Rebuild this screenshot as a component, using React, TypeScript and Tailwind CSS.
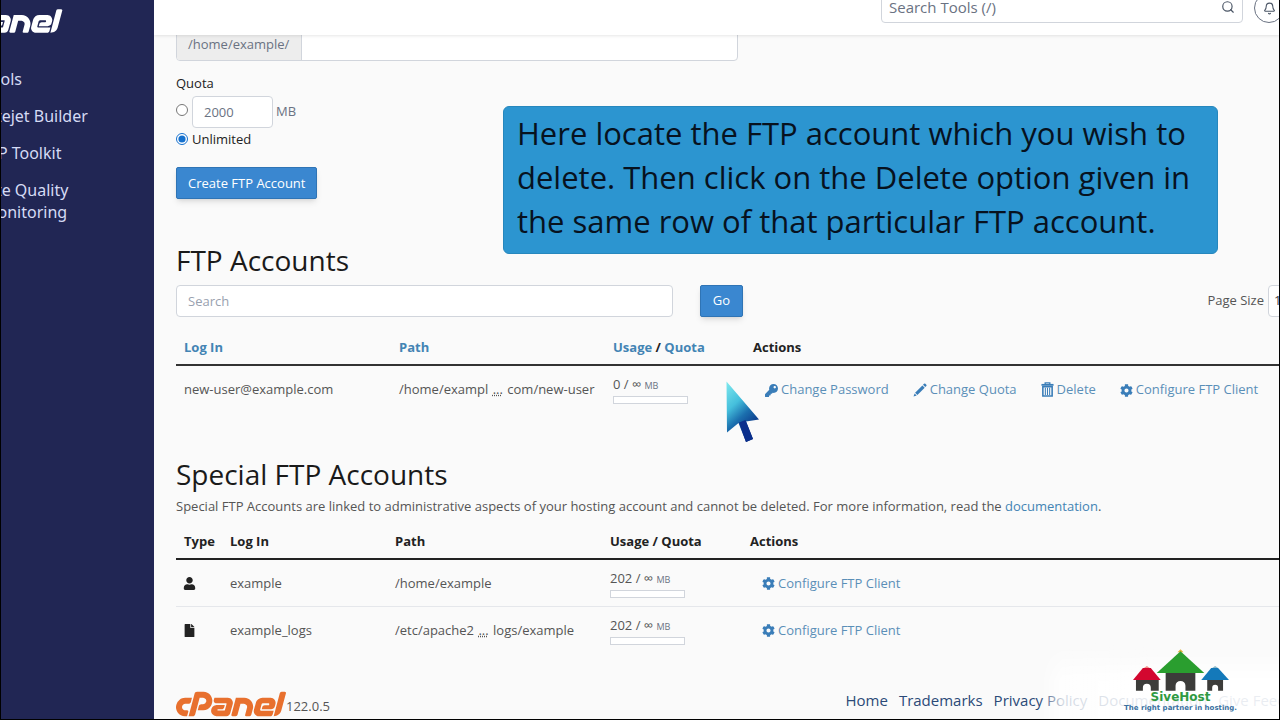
import type { ReactNode } from "react"
import { FaCog, FaFile, FaKey, FaUser } from "react-icons/fa"
import { SiCpanel } from "react-icons/si"
import { Bell, Search } from "lucide-react"

const navItems = ["Tools", "Sitejet Builder", "WP Toolkit", "Site Quality Monitoring"]

const footerLinks = ["Home", "Trademarks", "Privacy Policy", "Documentation", "Give Feedback"]

const specialAccounts = [
  { type: "Main", icon: FaUser, login: "example", path: "/home/example", used: "202" },
  { type: "Logs", icon: FaFile, login: "example_logs", path: "/etc/apache2 ... logs/example", used: "202" },
]

function TrashIcon() {
  return (
    <svg viewBox="0 0 14 16" className="w-[13px] h-[15px] -mt-0.5 shrink-0" fill="none" stroke="currentColor">
      <path d="M4.5 2V.8h5V2" strokeWidth="1.4" />
      <path d="M.5 3h13" strokeWidth="2" />
      <path d="M2 5h10v10H2z" strokeWidth="1.7" />
      <path d="M4.700 6v8M7 6v8M9.300 6v8" strokeWidth="1.1" />
    </svg>
  )
}

function PencilIcon() {
  return (
    <svg viewBox="0 0 14 14" className="size-[14px] shrink-0" fill="currentColor">
      <path d="M11 .8a1 1 0 0 1 1.400 0l.9.9a1 1 0 0 1 0 1.400l-1 1L10 1.800z" />
      <path d="M9.400 2.400l2.300 2.300-7.300 7.300-2.300-2.300z" />
      <path d="M1.600 10.400l2.100 2.100L.5 13.500z" />
    </svg>
  )
}

function Action({ icon, children }: { icon: ReactNode; children: ReactNode }) {
  return (
    <button type="button" className="flex items-center gap-[3px] px-3 text-[#5a8fb8] whitespace-nowrap">
      <span className="text-[#3a7db8]">{icon}</span>
      {children}
    </button>
  )
}

function Path({ value }: { value: string }) {
  const [start, end] = value.split(" ... ")
  if (!end) return <>{value}</>
  return (
    <>
      {start} <abbr title={value} className="mx-px underline decoration-dotted">...</abbr> {end}
    </>
  )
}

function Usage({ used }: { used: string }) {
  return (
    <div>
      <div className="leading-[18px]">
        {used} / ∞ <span className="text-[9px] text-gray-500">MB</span>
      </div>
      <div className="mt-px h-2 w-[75px] border border-gray-300 bg-white" />
    </div>
  )
}

function Sidebar() {
  return (
    <aside className="w-[153px] shrink-0 overflow-hidden bg-[#212654] text-[#d5dbf5]">
      <SiCpanel viewBox="0 9.3 24 5.4" className="mt-[9px] -ml-[46px] w-[108px] h-6 text-white" />
      <nav className="mt-[35px] -ml-[18px] w-[130px] flex flex-col gap-[15px] font-['Noto_Sans',sans-serif] text-base leading-[22px]">
        {navItems.map((item) => (
          <a key={item} href="#">{item}</a>
        ))}
      </nav>
    </aside>
  )
}

function Header() {
  return (
    <header className="relative z-10 h-[35px] shrink-0 flex items-end justify-end bg-white pb-3 shadow-[0_1px_3px_rgba(0,0,0,0.1)]">
      <label className="flex items-center w-[362px] h-8 border border-gray-300 rounded px-[7px] text-gray-600">
        <input aria-label="Search Tools" placeholder="Search Tools (/)" className="flex-1 min-w-0 text-[15px] outline-none placeholder:text-gray-500" />
        <Search className="size-[14px]" />
      </label>
      <button type="button" aria-label="Notifications" className="ml-[11px] -mr-[5px] size-[30px] shrink-0 rounded-full border border-gray-500 flex items-center justify-center text-gray-600">
        <Bell className="size-[13px]" />
      </button>
    </header>
  )
}

function CreateForm() {
  return (
    <form>
      <div className="-mt-[6px] flex h-8 w-[562px] border border-gray-300 rounded overflow-hidden bg-white">
        <label htmlFor="directory" className="w-[125px] flex items-center pl-[11px] bg-[#ededed] border-r border-gray-300 text-gray-500">
          /home/example/
        </label>
        <input id="directory" className="flex-1 px-3 outline-none" />
      </div>
      <div className="mt-3 leading-5 font-medium text-[#222]">Quota</div>
      <div className="mt-[3px] flex items-center">
        <input type="radio" name="quota" aria-label="Limited quota" className="size-3 -mt-1" />
        <input aria-label="Quota size" defaultValue="2000" className="ml-1 h-8 w-[81px] border border-gray-300 rounded bg-white px-[11px] text-gray-500" />
        <span className="ml-[3px] text-gray-500">MB</span>
      </div>
      <label className="mt-px flex items-center gap-1 leading-5 font-medium text-[#222]">
        <input type="radio" name="quota" defaultChecked className="size-3 accent-[#1570cd]" />
        Unlimited
      </label>
      <button type="button" className="mt-[18px] h-8 px-[11px] rounded-xs border border-[#2f74b5] bg-[#3a87d0] text-white font-medium leading-5 shadow-md">
        Create FTP Account
      </button>
    </form>
  )
}

function FtpAccounts() {
  return (
    <section className="mt-[43px]">
      <h2 className="text-[28px] leading-9 text-[#1a1a1a]">FTP Accounts</h2>
      <div className="mt-[7px] flex items-center">
        <input aria-label="Search accounts" placeholder="Search" className="h-8 w-[497px] border border-gray-300 rounded bg-white px-[11px] placeholder:text-gray-400" />
        <button type="button" className="ml-[27px] h-8 w-[43px] rounded-xs border border-[#2f74b5] bg-[#3a87d0] text-white font-medium shadow-md">Go</button>
        <label htmlFor="page-size" className="ml-auto">Page Size</label>
        <select id="page-size" className="ml-1 h-8 w-[55px] appearance-none border border-gray-300 rounded bg-white px-[5px] text-[#444]">
          <option>10</option>
        </select>
      </div>
      <table className="mt-3 w-full table-fixed text-left">
        <thead>
          <tr className="h-9 border-b-2 border-[#333] text-[#222]">
            <th className="w-[215px] px-2 pt-0.5 font-bold text-[#4384b4]">Log In</th>
            <th className="w-[214px] px-2 pt-0.5 font-bold text-[#4384b4]">Path</th>
            <th className="w-[140px] px-2 pt-0.5 font-bold">
              <a href="#" className="text-[#4384b4]">Usage</a> / <a href="#" className="text-[#4384b4]">Quota</a>
            </th>
            <th className="px-2 pt-0.5 font-bold">Actions</th>
          </tr>
        </thead>
        <tbody>
          <tr className="h-[47px]">
            <td className="px-2 pt-0.5">new-user@example.com</td>
            <td className="px-2 pt-0.5 whitespace-nowrap"><Path value="/home/exampl ... com/new-user" /></td>
            <td className="px-2"><Usage used="0" /></td>
            <td className="px-2 pt-0.5">
              <div className="flex">
                <Action icon={<FaKey className="size-[13px]" />}>Change Password</Action>
                <Action icon={<PencilIcon />}>Change Quota</Action>
                <Action icon={<TrashIcon />}>Delete</Action>
                <Action icon={<FaCog className="size-[13px]" />}>Configure FTP Client</Action>
              </div>
            </td>
          </tr>
        </tbody>
      </table>
    </section>
  )
}

function SpecialAccounts() {
  return (
    <section className="mt-11">
      <h2 className="text-[28px] leading-9 text-[#1a1a1a]">Special FTP Accounts</h2>
      <p className="mt-1 leading-5 whitespace-nowrap">
        Special FTP Accounts are linked to administrative aspects of your hosting account and cannot be deleted. For more information, read the{" "}
        <a href="#" className="text-[#4384b4]">documentation</a>.
      </p>
      <table className="mt-[7px] w-full table-fixed text-left">
        <thead>
          <tr className="h-9 border-b-2 border-[#222] text-[#222]">
            <th className="w-[46px] pl-2 pt-0.5 font-bold">Type</th>
            <th className="w-[165px] px-2 pt-0.5 font-bold">Log In</th>
            <th className="w-[215px] px-2 pt-0.5 font-bold">Path</th>
            <th className="w-[140px] px-2 pt-0.5 font-bold">Usage / Quota</th>
            <th className="px-2 pt-0.5 font-bold">Actions</th>
          </tr>
        </thead>
        <tbody>
          {specialAccounts.map(({ type, icon: Icon, login, path, used }) => (
            <tr key={login} className="h-[47px] border-b border-gray-200 last:border-b-0">
              <td className="pl-2 pt-0.5 text-[#222]"><Icon title={type} className="size-[13px] -ml-px" /></td>
              <td className="px-2 pt-0.5">{login}</td>
              <td className="px-2 pt-0.5 whitespace-nowrap"><Path value={path} /></td>
              <td className="px-2 pt-0.5"><Usage used={used} /></td>
              <td className="px-2 pt-0.5">
                <Action icon={<FaCog className="size-[13px]" />}>Configure FTP Client</Action>
              </td>
            </tr>
          ))}
        </tbody>
      </table>
    </section>
  )
}

function Footer() {
  return (
    <footer className="mt-[38px] flex items-center whitespace-nowrap">
      <SiCpanel viewBox="0 9.3 24 5.4" title="cPanel" className="w-[110px] h-[26px] text-[#e8702e]" />
      <span className="mt-1.5">122.0.5</span>
      <nav className="-mt-2 ml-auto pr-1 flex gap-[11px] text-[15px] text-[#2b4a78]">
        {footerLinks.map((link) => (
          <a key={link} href="#">{link}</a>
        ))}
      </nav>
    </footer>
  )
}

function Callout() {
  return (
    <div className="absolute left-[502px] top-[106px] w-[715px] h-[148px] rounded-md border border-[#2687bd] bg-[#2c95d0] px-[13px] pt-1 text-[31px] leading-[44px] text-[#07121f] whitespace-nowrap">
      Here locate the FTP account which you wish to
      <br />
      delete. Then click on the Delete option given in
      <br />
      the same row of that particular FTP account.
    </div>
  )
}

function Cursor() {
  return (
    <svg className="absolute left-[724px] top-[380px] w-9 h-16" viewBox="0 0 36 64">
      <defs>
        <linearGradient id="cursor-fill" x1="0" y1="0" x2="0.5" y2="1">
          <stop offset="0" stopColor="#7fe9ee" />
          <stop offset="0.4" stopColor="#45bfdc" />
          <stop offset="0.65" stopColor="#1b6fae" />
          <stop offset="1" stopColor="#06277f" />
        </linearGradient>
      </defs>
      <path d="M1.5 1.5 34 39.5 21 41.5 28 59 21 62 13.500 43 2 52.500z" fill="url(#cursor-fill)" />
      <path d="M14 42.500 20.500 40 28 59 21 62z" fill="#0a2f8c" />
    </svg>
  )
}

function Watermark() {
  return (
    <div className="absolute right-0 bottom-0 w-[240px] h-[76px]">
      <div className="absolute inset-0 bg-[linear-gradient(90deg,rgba(255,255,255,0),rgba(255,255,255,0.8)_10%,rgba(255,255,255,0.9)_50%)] mask-[linear-gradient(transparent,black_50%)]" />
      <div className="relative flex flex-col items-center pt-[6px] pl-[43px]">
        <svg viewBox="0 0 98 43" className="w-[97px] h-[43px] shrink-0">
          <path d="M46 3 49 0l3 3z" fill="#e0b23a" />
          <path d="M49 2 73 24H25z" fill="#2a9e2f" />
          <path d="M34 24h30v18H54v-5a5 5 0 0 0-10 0v5H34z" fill="#3c3c3a" />
          <path d="M12 19 15 17l3 2z" fill="#f0908a" />
          <path d="M11 19h8l10 12H1z" fill="#d3072f" />
          <path d="M4 31h23v11h-8v-3a4 4 0 0 0-8 0v3H4z" fill="#3c3c3a" />
          <path d="M81 19 84 17l3 2z" fill="#8cb8c8" />
          <path d="M80 19h7l11 12H70z" fill="#1479ba" />
          <path d="M76 31h16v11h-5v-3a3 3 0 0 0-6 0v3h-5z" fill="#3c3c3a" />
        </svg>
        <div className="font-['DejaVu_Sans',sans-serif] font-bold text-xs leading-[11px] text-[#2f9a42]">SiveHost</div>
        <div className="font-['DejaVu_Sans',sans-serif] font-bold text-[7px] leading-[10px] text-[#39709f]">The right partner in hosting.</div>
      </div>
    </div>
  )
}

export default function App() {
  return (
    <div className="relative h-screen flex overflow-hidden border-l border-r border-b border-black bg-[#fafafa] font-['Open_Sans',sans-serif] text-[13px] text-[#555]">
      <Sidebar />
      <div className="flex-1 min-w-0 flex flex-col overflow-hidden">
        <Header />
        <main className="pl-[22px] -mr-11">
          <CreateForm />
          <FtpAccounts />
          <SpecialAccounts />
          <Footer />
        </main>
      </div>
      <Callout />
      <Cursor />
      <Watermark />
    </div>
  )
}
